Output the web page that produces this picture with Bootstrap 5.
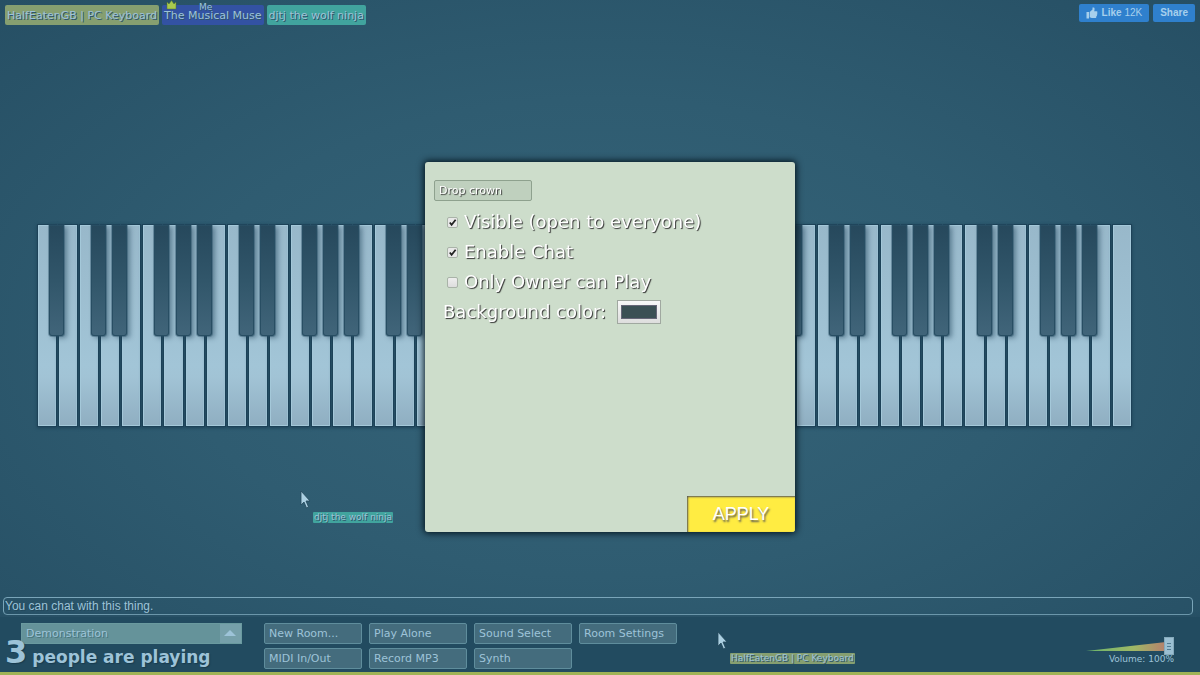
<!DOCTYPE html>
<html lang="en">
<head>
<meta charset="utf-8">
<meta name="viewport" content="width=device-width, initial-scale=1">
<title>Multiplayer Piano</title>
<link href="https://cdn.jsdelivr.net/npm/bootstrap@5.3.0/dist/css/bootstrap.min.css" rel="stylesheet">
<style>
  body {
    font-family: "DejaVu Sans", Verdana, sans-serif;
    font-size: 11px;
    line-height: 14px;
    color: #9dc3d8;
    background: radial-gradient(ellipse at center, #356479 0%, #2f5c71 50%, #264f64 100%);
  }
  button, input, select { font-family: inherit; color: inherit; }

  /* people online */
  .players { padding: 5px; gap: 3px; }
  .player { height: 20px; padding: 4px 2px; border-radius: 2px; text-shadow: 1px 1px 0 #2d5368; white-space: nowrap; }
  .olive { background: #869f70; }
  .royal { background: #3352a3; }
  .teal { background: #41a49e; }
  .crown { left: 4px; top: -5px; }
  .me-tag { left: 0; right: 0; top: -2px; font-size: 9px; line-height: 9px; text-align: center; padding-right: 14px; }
  .social-links { padding: 4px 5px; }
  .social { height: 18px; background: #2f80cd; border: 0; border-radius: 2px; font: 10px/18px "Liberation Sans", Arial, sans-serif; color: #a6cfec; padding: 0 7px; }

  /* piano */
  .piano { padding: 225px 69px 0 38px; }
  .piano-keys { gap: 3px; height: 201px; }
  .white-key, .black-key { border: 0; padding: 0; }
  .white-key {
    background: linear-gradient(#98b8ca, #a2c5d7 70%, #a1c3d5 76%, #8faec1);
    box-shadow: inset 0 0 0 1px #a4c8d9, 0 0 0 1px #1d4258, 0 1px 3px 1px #1d4258;
  }
  .black-key {
    top: 0; right: -8px; z-index: 2; width: 15px; height: 111px;
    border-radius: 0 0 3px 3px;
    background: linear-gradient(#26485c, #31566a 50%, #41657a);
    box-shadow: inset 0 0 0 1px #284e63, 0 0 0 1px rgba(40, 78, 99, .4), 3px 2px 5px rgba(30, 65, 88, .5);
  }

  /* remote cursors */
  .remote { z-index: 5; font-size: 9px; line-height: 11px; white-space: nowrap; }
  .remote span { margin: 22px 0 0 2px; padding: 0 1px; border-radius: 1px; text-shadow: 1px 1px 0 #2d5368; }

  /* chat and bottom bar */
  .chat { padding: 0 7px 2px 3px; }
  .chat input {
    height: 18px; padding: 0 1px; background: transparent; border: 1px solid #7aa5b9; border-radius: 4px;
    font: 12px/16px "Liberation Sans", Arial, sans-serif; color: #9dc3d8; text-shadow: 1px 1px 0 #22485b;
  }
  .chat input::placeholder { color: inherit; opacity: 1; }
  .bottom-bar { height: 58px; padding: 6px 26px 0 5px; background: #224b60; border-bottom: 3px solid #a0b356; box-shadow: 0 -1px 3px #284f64; }
  .room-side { width: 237px; margin-right: 22px; }
  .room-select {
    height: 21px; width: 221px; margin-left: 16px; padding: 0 4px; border: 1px solid #6a9a9f; border-radius: 0; appearance: none;
    text-shadow: 1px 1px 0 #47757d;
    background: #65939a url("data:image/svg+xml,%3Csvg xmlns='http://www.w3.org/2000/svg' width='21' height='21'%3E%3Cpath fill='%2376a0aa' d='M0 0h21v21H0z'/%3E%3Cpath fill='%239dc3d8' d='M4 13l6-6 6 6z'/%3E%3C/svg%3E") no-repeat right center;
  }
  .count { margin-top: -8px; gap: 5px; font-size: 17px; line-height: 17px; font-weight: bold; text-shadow: 1px 1px 1px #183b4e; }
  .count-number { font-size: 32px; line-height: 32px; }
  .room-buttons { display: grid; grid-template-columns: repeat(4, 98px); grid-auto-rows: 21px; gap: 4px 7px; }
  .room-buttons button, .crown-button {
    padding: 0 4px; text-align: left; border: 1px solid #5f8d9c; border-radius: 2px; background: #446c7d;
  }
  .volume { width: 88px; font-size: 9px; line-height: 11px; text-align: right; padding-top: 14px; }
  .volume-track { height: 17px; }
  .volume-track svg { left: 0; top: 1px; }
  .volume input { appearance: none; background: transparent; width: 88px; height: 18px; margin: 0; top: 0; left: 0; }
  .volume input::-webkit-slider-thumb {
    appearance: none; width: 10px; height: 18px; border: 1px solid #85a9bb;
    background: linear-gradient(#527c93, #527c93) 2px 5px / 4px 1px no-repeat, linear-gradient(#527c93, #527c93) 2px 8px / 4px 1px no-repeat, linear-gradient(#527c93, #527c93) 2px 11px / 4px 1px no-repeat, #9bbfd2;
  }

  /* room settings dialog */
  .dialog-layer { z-index: 10; padding: 19px 0 0 20px; pointer-events: none; }
  .settings {
    pointer-events: auto; width: 370px; height: 370px; padding: 18px 0 0 9px; overflow: hidden;
    background: #cdddcb; border-radius: 3px; box-shadow: 0 0 7px 1px #001018;
    font-size: 18px; line-height: 30px; color: #fff; text-shadow: 1px 1px 1px #333;
  }
  .crown-button { width: 98px; height: 21px; font-size: 11px; line-height: 14px; color: #fff; background: #bfd0be; border-color: #8ea18e; text-shadow: inherit; }
  .options { padding-top: 6px; }
  .option { height: 30px; padding-left: 13px; gap: 6px; }
  .option input {
    appearance: none; width: 11px; height: 11px; margin: 0; border: 1px solid #a9b3a8; border-radius: 2px; background: linear-gradient(#eee, #ddd);
  }
  .option input:checked {
    background: url("data:image/svg+xml,%3Csvg xmlns='http://www.w3.org/2000/svg' viewBox='0 0 10 10'%3E%3Cpath d='M2 5l2 2.500L8.500 2' fill='none' stroke='%23222' stroke-width='2'/%3E%3C/svg%3E") center / 9px 9px no-repeat, #e8e8e8;
  }
  .colour-row { height: 30px; padding-left: 9px; gap: 11px; }
  .colour-row input { appearance: none; width: 44px; height: 24px; padding: 4px 3px; border: 1px solid #a0a8a0; background: linear-gradient(#f8f8f8, #ddd); }
  .colour-row input::-webkit-color-swatch-wrapper { padding: 0; }
  .colour-row input::-webkit-color-swatch { border: 1px solid #667; border-radius: 0; }
  .apply {
    width: 108px; height: 36px; border: 0; background: #ffec42; color: #fff;
    font: 18px/34px "Liberation Sans", Arial, sans-serif; text-shadow: 1px 2px 2px #555; box-shadow: inset 1px 1px 2px #555;
  }
</style>
</head>
<body class="vh-100 overflow-hidden">
<div class="d-flex flex-column h-100 position-relative">
  <header class="position-absolute w-100 d-flex justify-content-between align-items-start">
    <div class="players d-flex">
      <div class="player olive">HalfEatenGB | PC Keyboard</div>
      <div class="player royal position-relative">
        <svg class="crown position-absolute" width="11" height="10" viewBox="0 0 11 10"><path d="M1 9V2l2 2 2.500-3.500L8 4l2-2v7z" fill="#a9c94e" stroke="#52772e" stroke-width=".5"/></svg>
        <span class="me-tag position-absolute">Me</span>The Musical Muse
      </div>
      <div class="player teal">djtj the wolf ninja</div>
    </div>
    <div class="social-links d-flex gap-1">
      <button class="social d-flex align-items-center gap-1">
        <svg width="12" height="12" viewBox="0 0 11 12" fill="#a6cfec"><path d="M0 5h2.500v6.500H0zM3.200 5 6 2.500V.5h1c1.500 0 1.200 2 .7 3.800H10c1.200 0 1.200 1.400.5 1.700.7.500.500 1.400-.2 1.700.4.600.2 1.300-.5 1.500.3.900-.2 1.800-1 1.800H5.200l-2-.8z"/></svg>
        <span><b>Like</b> 12K</span>
      </button>
      <button class="social fw-bold">Share</button>
    </div>
  </header>

  <main class="piano flex-grow-1">
    <div class="piano-keys d-flex" id="keys"></div>
  </main>

  <div class="chat"><input class="w-100 d-block" type="text" aria-label="Chat" placeholder="You can chat with this thing."></div>

  <footer class="bottom-bar d-flex align-items-start">
    <div class="room-side">
      <select class="room-select d-block" aria-label="Room"><option>Demonstration</option></select>
      <div class="count d-flex align-items-baseline"><span class="count-number">3</span><span>people are playing</span></div>
    </div>
    <div class="room-buttons">
      <button>New Room...</button><button>Play Alone</button><button>Sound Select</button><button>Room Settings</button>
      <button>MIDI In/Out</button><button>Record MP3</button><button>Synth</button>
    </div>
    <div class="volume ms-auto">
      <div class="volume-track position-relative">
        <svg class="position-absolute" width="80" height="14" viewBox="0 0 80 14"><defs><linearGradient id="vol"><stop offset="0" stop-color="#69b56c"/><stop offset=".6" stop-color="#a0b866"/><stop offset="1" stop-color="#b57f6c"/></linearGradient></defs><path d="M0 13 80 4v9z" fill="url(#vol)"/></svg>
        <input class="position-absolute" id="volume" type="range" value="100">
      </div>
      <label for="volume" class="text-nowrap">Volume: 100%</label>
    </div>
  </footer>
</div>

<div class="remote position-absolute d-flex align-items-start" style="left: 25%; top: 490px">
  <svg width="11" height="20" viewBox="0 0 11 20"><path d="M1 1v14l3-3 2.500 6 2-1L6 11h4z" fill="#acd0e2" stroke="#23475a" stroke-width=".8"/></svg>
  <span class="teal">djtj the wolf ninja</span>
</div>
<div class="remote position-absolute d-flex align-items-start" style="left: 717px; top: 631px">
  <svg width="11" height="20" viewBox="0 0 11 20"><path d="M1 1v14l3-3 2.500 6 2-1L6 11h4z" fill="#acd0e2" stroke="#23475a" stroke-width=".8"/></svg>
  <span class="olive">HalfEatenGB | PC Keyboard</span>
</div>

<div class="dialog-layer position-fixed top-0 start-0 w-100 h-100 d-flex align-items-center justify-content-center">
  <form class="settings d-flex flex-column" onsubmit="return false">
    <button class="crown-button" type="button">Drop crown</button>
    <div class="options">
      <label class="option d-flex align-items-center"><input type="checkbox" checked>Visible (open to everyone)</label>
      <label class="option d-flex align-items-center"><input type="checkbox" checked>Enable Chat</label>
      <label class="option d-flex align-items-center"><input type="checkbox">Only Owner can Play</label>
      <label class="colour-row d-flex align-items-center">Background color: <input type="color" value="#3b5054"></label>
    </div>
    <button class="apply mt-auto ms-auto" type="submit">APPLY</button>
  </form>
</div>

<script>
  // 88 keys from A0 to C8: 52 white keys, a black key after each of A, C, D, F and G
  const keys = document.getElementById('keys');
  for (let i = 0; i < 52; i++) {
    const note = 'ABCDEFG'[i % 7];
    const slot = document.createElement('div');
    slot.className = 'position-relative d-flex flex-fill';
    slot.innerHTML = `<button class="white-key w-100" aria-label="${note}"></button>`;
    if ('ACDFG'.includes(note) && i < 51) slot.innerHTML += `<button class="black-key position-absolute" aria-label="${note} sharp"></button>`;
    keys.append(slot);
  }
</script>
<script src="https://cdn.jsdelivr.net/npm/bootstrap@5.3.0/dist/js/bootstrap.bundle.min.js"></script>
</body>
</html>
